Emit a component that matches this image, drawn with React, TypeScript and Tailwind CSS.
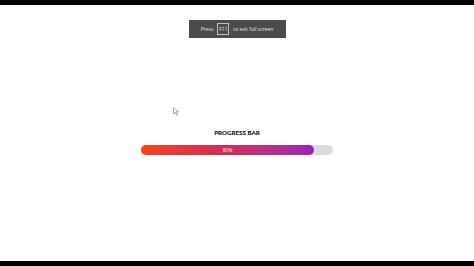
import React from "react";

export default function App() {
  return (
    <div className="w-[474px] h-[266px] flex flex-col bg-white overflow-hidden relative" style={{ fontFamily: "'Open Sans', 'Liberation Sans', sans-serif" }}>
      <div className="h-[5px] bg-black shrink-0" />
      <div className="flex-1 flex flex-col items-center">
        <div className="mt-[15px] h-[18px] w-[97px] bg-[#4b4b4d] flex items-center justify-center gap-[3px] text-[5px] text-[#e6e6e6] leading-none">
          <span>Press</span>
          <span className="mx-[1px] w-[12px] h-[12px] border border-[#bdbdbd] flex items-center justify-center">F11</span>
          <span>to exit full screen</span>
        </div>
        <div className="mt-[91px] text-[6.2px] leading-[8px] font-black text-[#111]" style={{ fontFamily: "Lato, 'Liberation Sans', sans-serif" }}>
          PROGRESS BAR
        </div>
        <div className="mt-[8px] w-[192px] h-[10px] rounded-full bg-[#dcdcdc] flex">
          <div className="w-[90%] h-full rounded-full bg-gradient-to-r from-[#f8430e] via-[#d02a55] to-[#9a20b8] flex items-center justify-center text-[5px] leading-none text-white font-medium">
            90%
          </div>
        </div>
      </div>
      <div className="h-[5px] bg-black shrink-0" />
      <svg className="absolute left-[173px] top-[107px]" width="6" height="9" viewBox="0 0 12 18">
        <path d="M1 1 L1 14 L4.5 10.5 L7 16.5 L9 15.5 L6.5 9.5 L11 9.5 Z" fill="#fff" stroke="#777" strokeWidth="1.2" />
      </svg>
    </div>
  );
}
